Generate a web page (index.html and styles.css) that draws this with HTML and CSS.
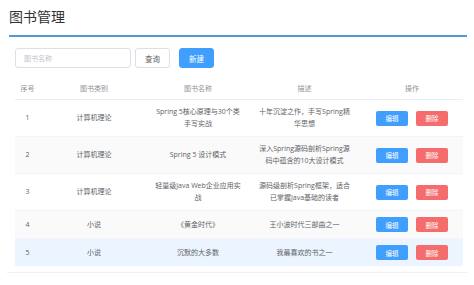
FILE: index.html
```html
<!DOCTYPE html>
<html lang="zh-CN">
<head>
    <meta charset="UTF-8">
    <meta name="viewport" content="width=device-width, initial-scale=1.0">
    <title>图书管理</title>
    <link rel="stylesheet" href="styles.css">
</head>
<body>

<div class="page">
    <h2 class="page-title">图书管理</h2>

    <div class="toolbar">
        <input type="text" class="search-input" placeholder="图书名称">
        <button class="btn btn-plain">查询</button>
        <button class="btn btn-primary btn-new">新建</button>
    </div>

    <div class="table-wrap">
        <table class="book-table">
            <colgroup>
                <col class="col-id">
                <col class="col-type">
                <col class="col-name">
                <col class="col-desc">
                <col class="col-ops">
            </colgroup>
            <thead>
                <tr>
                    <th>序号</th>
                    <th>图书类别</th>
                    <th>图书名称</th>
                    <th>描述</th>
                    <th>操作</th>
                </tr>
            </thead>
            <tbody>
                <tr>
                    <td>1</td>
                    <td>计算机理论</td>
                    <td>Spring 5核心原理与30个类手写实战</td>
                    <td class="desc">十年沉淀之作，手写Spring精华思想</td>
                    <td><button class="btn-mini edit">编辑</button><button class="btn-mini del">删除</button></td>
                </tr>
                <tr class="stripe">
                    <td>2</td>
                    <td>计算机理论</td>
                    <td>Spring 5 设计模式</td>
                    <td class="desc">深入Spring源码剖析Spring源码中蕴含的10大设计模式</td>
                    <td><button class="btn-mini edit">编辑</button><button class="btn-mini del">删除</button></td>
                </tr>
                <tr>
                    <td>3</td>
                    <td>计算机理论</td>
                    <td>轻量级Java Web企业应用实战</td>
                    <td class="desc">源码级剖析Spring框架，适合已掌握Java基础的读者</td>
                    <td><button class="btn-mini edit">编辑</button><button class="btn-mini del">删除</button></td>
                </tr>
                <tr class="stripe">
                    <td>4</td>
                    <td>小说</td>
                    <td>《黄金时代》</td>
                    <td class="desc">王小波时代三部曲之一</td>
                    <td><button class="btn-mini edit">编辑</button><button class="btn-mini del">删除</button></td>
                </tr>
                <tr class="current">
                    <td>5</td>
                    <td>小说</td>
                    <td>沉默的大多数</td>
                    <td class="desc">我最喜欢的书之一</td>
                    <td><button class="btn-mini edit">编辑</button><button class="btn-mini del">删除</button></td>
                </tr>
            </tbody>
        </table>
    </div>
</div>

</body>
</html>
```

FILE: styles.css
```css
body {
    margin: 0;
    padding: 0;
    background: #fff;
    font-family: "Open Sans", "Noto Sans CJK SC", sans-serif;
    color: #606266;
}
.page {
    padding: 7px 7px 0 9px;
}
.page-title {
    margin: 0;
    font-size: 14px;
    font-weight: normal;
    line-height: 20px;
    color: #303133;
    padding-bottom: 8px;
    border-bottom: 2px solid #5898d0;
}
.toolbar {
    display: flex;
    align-items: center;
    margin-top: 11px;
    padding-left: 6px;
}
.search-input {
    box-sizing: border-box;
    width: 116px;
    height: 20px;
    padding: 0 8px;
    border: 1px solid #dcdfe6;
    border-radius: 3px;
    font-family: inherit;
    font-size: 7px;
    outline: none;
}
.search-input::placeholder {
    color: #c0c4cc;
}
.btn {
    box-sizing: border-box;
    height: 20px;
    width: 35px;
    padding: 0;
    border-radius: 3px;
    font-family: inherit;
    font-size: 7.5px;
    cursor: pointer;
}
.btn-plain {
    margin-left: 4px;
    border: 1px solid #dcdfe6;
    background: #fff;
    color: #606266;
}
.btn-primary {
    border: 1px solid #409eff;
    background: #409eff;
    color: #fff;
}
.btn-new {
    margin-left: 9px;
}
.table-wrap {
    margin: 11px 0 0 -2px;
    padding: 0 4px 6px 8px;
    border-bottom: 1px solid #f0f0f2;
}
.book-table {
    width: 448px;
    table-layout: fixed;
    border-collapse: collapse;
    font-size: 7px;
    line-height: 12px;
}
.col-id { width: 25px; }
.col-type { width: 108px; }
.col-name { width: 100px; }
.col-desc { width: 113px; }
.col-ops { width: 102px; }
.book-table th {
    height: 20px;
    padding: 0 5px;
    font-weight: normal;
    color: #909399;
    border-bottom: 1px solid #ebeef5;
}
.book-table td {
    padding: 6px 5px;
    text-align: center;
    border-bottom: 1px solid #f3f4f7;
}
.book-table td.desc {
    padding: 6px 8px;
}
.book-table tr.stripe td {
    background: #fafafa;
}
.book-table tr.current td {
    background: #ecf5ff;
}
.book-table tbody tr:last-child td {
    border-bottom: none;
}
.btn-mini {
    width: 32px;
    height: 15px;
    padding: 0;
    border: none;
    border-radius: 2px;
    color: #fff;
    font-family: inherit;
    font-size: 6.5px;
    vertical-align: middle;
    cursor: pointer;
}
.btn-mini + .btn-mini {
    margin-left: 8px;
}
.edit {
    background: #409eff;
}
.del {
    background: #f56c6c;
}
```
